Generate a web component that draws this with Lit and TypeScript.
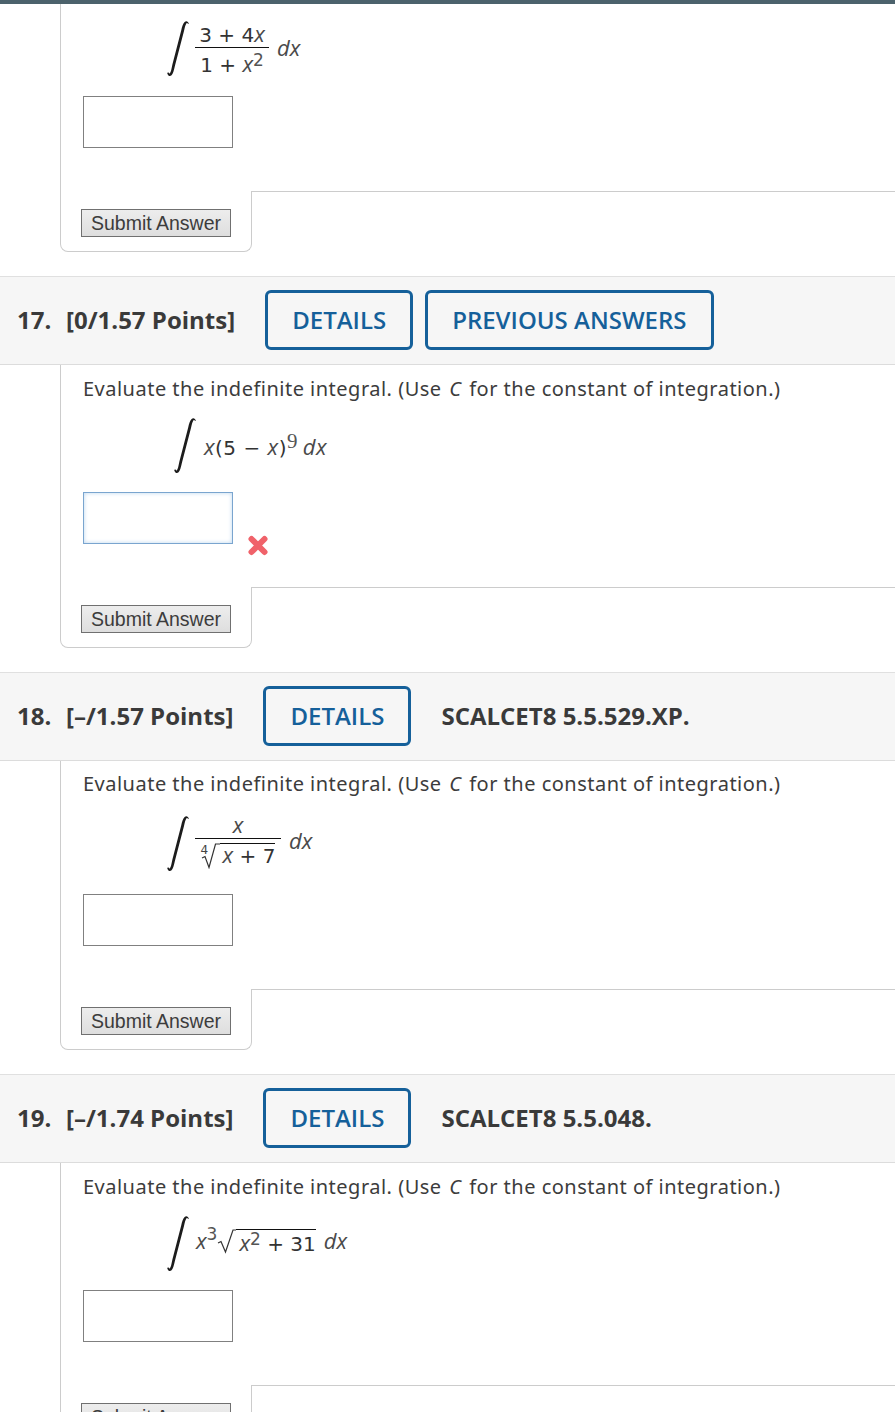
import { LitElement, html, css, svg } from "lit";
import { customElement } from "lit/decorators.js";

const integral = html`<svg class="int" width="24" height="58" viewBox="0 0 24 58"><path d="M21.900 3.600C21.100 1.200 19.200.4 17.600 2C15.900 3.700 15 6.800 14.200 10.500L5.400 44.500C4.500 49 3.900 52.200 2.900 53.200C2.300 53.700 1.700 53.300 1.300 52.300L.2 52.900C.7 55.600 2.700 56.700 4.300 55.500C6 54.200 7 50.200 8 45.500L17 11C17.800 7.300 18.500 4.600 19.400 3.400C20 2.700 20.700 3 21 4.100Z" fill="#1c1c1c"/></svg>`;
const radical = (w: number, h: number, d: string) => svg`<svg class="rad" width="${w}" height="${h}" viewBox="0 0 ${w} ${h}"><path d="${d}" fill="none" stroke="#333" stroke-width="1.200"/></svg>`;
const cross = html`<svg class="cross" width="22" height="21" viewBox="0 0 22 21"><path d="M4.500 4 17.500 17M17.500 4 4.500 17" fill="none" stroke="#f0626a" stroke-linecap="round" stroke-width="6"/></svg>`;

@customElement("app-root")
export class AppRoot extends LitElement {
  static styles = css`
    :host { display: block; height: 1412px; overflow: hidden; background: #fff; color: #3c3c3c; font-family: "Open Sans", "Noto Sans", sans-serif; }
    .topbar { height: 4px; background: #4c626c; }
    .q-head { display: flex; align-items: center; box-sizing: border-box; height: 89px; margin-top: 24px; padding: 0 0 1px 17px; background: #f6f6f6; border-top: 1px solid #e0e0e0; border-bottom: 1px solid #dcdcdc; font-size: 24px; font-weight: 700; color: #3a3a3a; }
    .num { width: 49px; margin-top: -2px; }
    .pts { margin: -2px 30px 0 0; }
    .btn { display: flex; align-items: center; justify-content: center; box-sizing: border-box; height: 60px; border: 3px solid #15609a; border-radius: 6px; color: #15609a; font-weight: 600; padding: 0 24px 2px; background: #f6f6f6; }
    .btn + .btn { margin-left: 12px; }
    .code { margin: -2px 0 0 30px; color: #3a3a3a; }
    .q-body { margin-left: 60px; }
    .content { border-left: 1px solid #ccc; padding-left: 22px; padding-bottom: 43px; }
    .prompt { font-family: "Noto Sans", sans-serif; font-size: 20px; line-height: 24px; padding-top: 12px; letter-spacing: 0.49px; white-space: nowrap; color: #3c3c3c; }
    .prompt.tight { padding-top: 11px; }
    .prompt i { font-style: italic; margin: 0 2px; }
    .m { display: flex; align-items: flex-start; font-family: "DejaVu Sans", sans-serif; font-size: 20px; color: #333; white-space: nowrap; box-sizing: border-box; }
    .m i { font-family: "Open Sans", sans-serif; font-style: italic; color: #4a4a4a; font-size: 22px; }
    .m sup { font-size: 17px; line-height: 0; vertical-align: 6px; font-family: "DejaVu Sans", sans-serif; color: #555; }
    .m .nine { font-family: "Liberation Serif", serif; font-size: 21px; vertical-align: 7px; }
    .m .e3 sup { vertical-align: 9px; }
    .int { flex: none; }
    .frac { display: inline-flex; flex-direction: column; align-items: center; }
    .over { border-bottom: 1px solid #111; text-align: center; align-self: stretch; }
    .dx { font-family: "Open Sans", sans-serif; font-style: italic; font-size: 22px; color: #4a4a4a; }
    .rad { flex: none; display: block; }
    .root { display: flex; align-items: flex-start; position: relative; }
    .rootin { border-top: 1px solid #111; line-height: 24px; padding: 0 0 0 3px; }
    .r2 .rootin { line-height: 21px; }
    .idx { position: absolute; left: 0; top: 0; font-size: 12px; line-height: 14px; color: #444; }
    .inp { display: flex; height: 52px; }
    .box { box-sizing: border-box; width: 150px; height: 52px; border: 1px solid #808080; background: #fff; margin: 0; padding: 0; display: block; }
    .box.focus { border-color: #7aa5cf; box-shadow: inset 0 0 4px #bcd6ee; }
    .cross { margin: 43px 0 0 14px; flex: none; }
    .foot { display: flex; height: 61px; }
    .left { box-sizing: border-box; width: 192px; border: 1px solid #ccc; border-top: 0; border-radius: 0 0 8px 8px; padding: 18px 0 0 20px; }
    .right { flex: 1; border-top: 1px solid #ccc; }
    .submit { display: block; box-sizing: border-box; width: 150px; height: 28px; margin: 0; padding: 0; border: 1px solid #707070; background: linear-gradient(#ededed, #dedede); font-family: "Liberation Sans", Arial, sans-serif; font-size: 19.500px; color: #3c3c3c; text-align: center; }
    .m0 { height: 92px; padding: 16px 0 0 84px; }
    .f0 { margin: 1px 0 0 4px; width: 74px; }
    .n0 { line-height: 24px; }
    .d0 { line-height: 30px; }
    .dx0 { margin: 12px 0 0 8px; line-height: 30px; }
    .m1 { height: 91px; padding: 16px 0 0 91px; }
    .e1 { margin: 14px 0 0 6px; line-height: 30px; letter-spacing: 0.5px; }
    .e1 .dx { margin-left: -2px; }
    .m2 { height: 98px; padding: 19px 0 0 84px; }
    .f2 { margin: -3px 0 0 4px; width: 86px; }
    .n2 { line-height: 24px; }
    .r2 { margin-top: 4px; }
    .dx2 { margin: 10px 0 0 8px; line-height: 30px; }
    .m3 { height: 91px; padding: 16px 0 0 84px; }
    .e3 { margin: 10px 0 0 5px; line-height: 30px; }
    .r3 { margin: 14px 0 0 0; }
    .dx3 { margin: 10px 0 0 8px; line-height: 30px; }
  `;

  private foot() {
    return html`<div class="foot"><div class="left"><button class="submit">Submit Answer</button></div><div class="right"></div></div>`;
  }
  private prompt(tight = false) {
    return html`<div class="prompt ${tight ? "tight" : ""}">Evaluate the indefinite integral. (Use <i>C</i> for the constant of integration.)</div>`;
  }
  private inp(focus = false, x = false) {
    return html`<div class="inp"><input class="box ${focus ? "focus" : ""}" />${x ? cross : ""}</div>`;
  }

  render() {
    return html`
      <div class="topbar"></div>
      <div class="q-body">
        <div class="content">
          <div class="m m0">${integral}<div class="frac f0"><div class="over n0">3 + 4<i>x</i></div><div class="d0">1 + <i>x</i><sup>2</sup></div></div><span class="dx dx0">dx</span></div>
          ${this.inp()}
        </div>
        ${this.foot()}
      </div>

      <div class="q-head"><span class="num">17.</span><span class="pts">[0/1.57 Points]</span><span class="btn">DETAILS</span><span class="btn">PREVIOUS ANSWERS</span></div>
      <div class="q-body">
        <div class="content">
          ${this.prompt()}
          <div class="m m1">${integral}<div class="e1"><i>x</i>(5 − <i>x</i>)<sup class="nine">9</sup> <span class="dx">dx</span></div></div>
          ${this.inp(true, true)}
        </div>
        ${this.foot()}
      </div>

      <div class="q-head"><span class="num">18.</span><span class="pts">[–/1.57 Points]</span><span class="btn">DETAILS</span><span class="code">SCALCET8 5.5.529.XP.</span></div>
      <div class="q-body">
        <div class="content">
          ${this.prompt(true)}
          <div class="m m2">${integral}<div class="frac f2"><div class="over n2"><i>x</i></div><div class="root r2"><span class="idx">4</span>${radical(19, 26, "M1 15l3-1.500 4 11L14.500 1h4.500")}<span class="rootin"><i>x</i> + 7</span></div></div><span class="dx dx2">dx</span></div>
          ${this.inp()}
        </div>
        ${this.foot()}
      </div>

      <div class="q-head"><span class="num">19.</span><span class="pts">[–/1.74 Points]</span><span class="btn">DETAILS</span><span class="code">SCALCET8 5.5.048.</span></div>
      <div class="q-body">
        <div class="content">
          ${this.prompt()}
          <div class="m m3">${integral}<div class="e3"><i>x</i><sup>3</sup></div><div class="root r3">${radical(19, 26, "M1 14l3-1.500 4.500 10.500L16 1h3")}<span class="rootin"><i>x</i><sup>2</sup> + 31</span></div><span class="dx dx3">dx</span></div>
          ${this.inp()}
        </div>
        ${this.foot()}
      </div>
    `;
  }
}
